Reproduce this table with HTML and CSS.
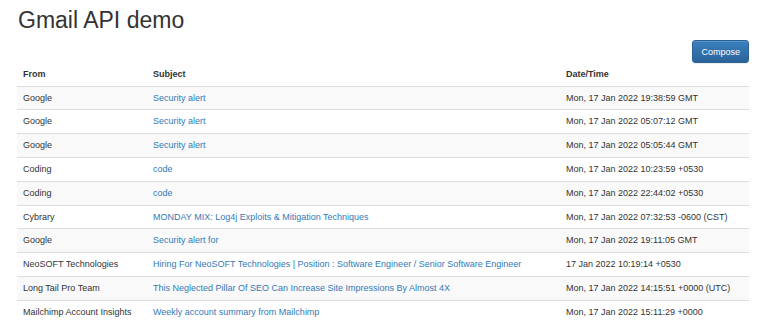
FILE: index.html
```html
<!DOCTYPE html>
<html lang="en">
<head>
<meta charset="utf-8">
<title>Gmail API demo</title>
<link rel="stylesheet" href="styles.css">
</head>
<body>
<div class="container">
  <h1 class="title">Gmail API demo</h1>
  <div class="toolbar">
    <button class="btn-compose" type="button">Compose</button>
  </div>
  <table class="mail-table">
    <colgroup>
      <col class="col-from">
      <col class="col-subject">
      <col class="col-date">
    </colgroup>
    <thead>
      <tr><th>From</th><th>Subject</th><th>Date/Time</th></tr>
    </thead>
    <tbody>
      <tr><td>Google</td><td><a href="#">Security alert</a></td><td>Mon, 17 Jan 2022 19:38:59 GMT</td></tr>
      <tr><td>Google</td><td><a href="#">Security alert</a></td><td>Mon, 17 Jan 2022 05:07:12 GMT</td></tr>
      <tr><td>Google</td><td><a href="#">Security alert</a></td><td>Mon, 17 Jan 2022 05:05:44 GMT</td></tr>
      <tr><td>Coding</td><td><a href="#">code</a></td><td>Mon, 17 Jan 2022 10:23:59 +0530</td></tr>
      <tr><td>Coding</td><td><a href="#">code</a></td><td>Mon, 17 Jan 2022 22:44:02 +0530</td></tr>
      <tr><td>Cybrary</td><td><a href="#">MONDAY MIX: Log4j Exploits &amp; Mitigation Techniques</a></td><td>Mon, 17 Jan 2022 07:32:53 -0600 (CST)</td></tr>
      <tr><td>Google</td><td><a href="#">Security alert for</a></td><td>Mon, 17 Jan 2022 19:11:05 GMT</td></tr>
      <tr><td>NeoSOFT Technologies</td><td><a href="#">Hiring For NeoSOFT Technologies | Position : Software Engineer / Senior Software Engineer</a></td><td>17 Jan 2022 10:19:14 +0530</td></tr>
      <tr><td>Long Tail Pro Team</td><td><a href="#">This Neglected Pillar Of SEO Can Increase Site Impressions By Almost 4X</a></td><td>Mon, 17 Jan 2022 14:15:51 +0000 (UTC)</td></tr>
      <tr><td>Mailchimp Account Insights</td><td><a href="#">Weekly account summary from Mailchimp</a></td><td>Mon, 17 Jan 2022 15:11:29 +0000</td></tr>
    </tbody>
  </table>
</div>
</body>
</html>
```

FILE: styles.css
```css
html, body {
  margin: 0;
  padding: 0;
  background: #fff;
}
body {
  font-family: "Liberation Sans", Arial, Helvetica, sans-serif;
  font-size: 9px;
  color: #333;
}
.container {
  width: 732px;
  padding: 0 19px 0 17px;
}
.title {
  margin: 8px 0 0 1px;
  font-size: 23px;
  font-weight: 500;
  line-height: 25px;
  color: #333;
}
.toolbar {
  display: flex;
  justify-content: flex-end;
  margin-top: 7px;
}
.btn-compose {
  font-family: inherit;
  font-size: 9px;
  line-height: 12px;
  padding: 4.5px 8px 4.5px 8px;
  color: #fff;
  border: 1px solid #2b6399;
  border-radius: 3px;
  background: linear-gradient(to bottom, #3a80bd 0%, #2a639a 100%);
  box-shadow: inset 0 1px 0 rgba(255,255,255,.15), 0 1px 1px rgba(0,0,0,.075);
  cursor: pointer;
}
.mail-table {
  width: 732px;
  border-collapse: collapse;
  border-spacing: 0;
  table-layout: fixed;
}
.col-from { width: 130px; }
.col-subject { width: 413px; }
.col-date { width: 189px; }
.mail-table th,
.mail-table td {
  text-align: left;
  padding: 5px 6px;
  line-height: 12.8px;
  vertical-align: top;
  white-space: nowrap;
  overflow: hidden;
}
.mail-table th {
  font-weight: bold;
  border-bottom: 1.4px solid #ddd;
  padding-top: 4.8px;
  padding-bottom: 5px;
}
.mail-table td {
  border-top: 1px solid #ddd;
}
.mail-table tbody tr:nth-child(odd) {
  background: #f9f9f9;
}
.mail-table a {
  color: #337ab7;
  text-decoration: none;
}
```
